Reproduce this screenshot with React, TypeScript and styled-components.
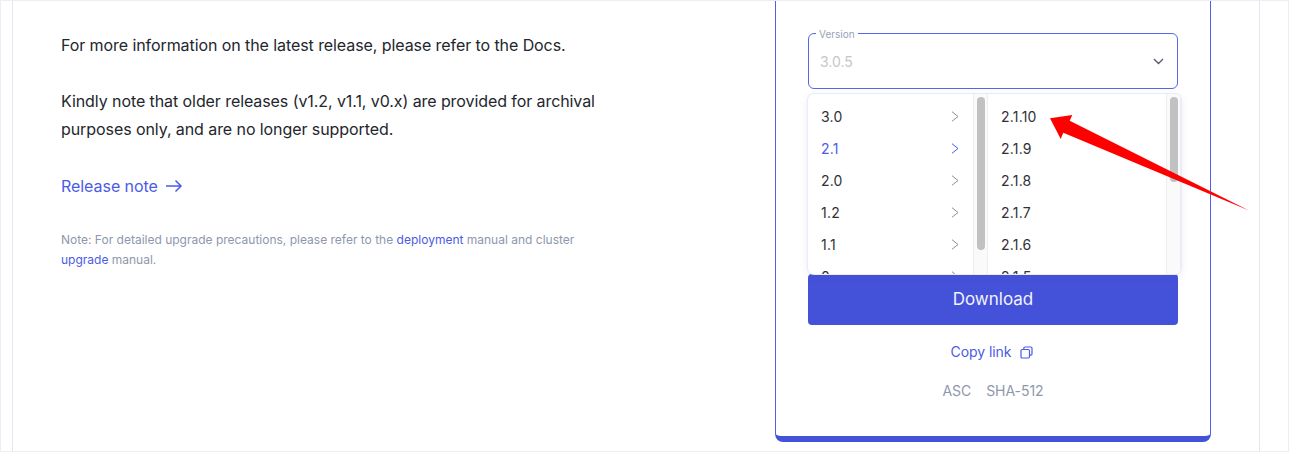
import styled, { createGlobalStyle } from 'styled-components';

const majors = ['3.0', '2.1', '2.0', '1.2', '1.1', '0.x'];
const minors = ['2.1.10', '2.1.9', '2.1.8', '2.1.7', '2.1.6', '2.1.5'];

const App = () => {
  return (
    <Frame>
      <GlobalStyle />
      <Panel>
        <Intro>
          <Paragraph>For more information on the latest release, please refer to the Docs.</Paragraph>
          <Paragraph>
            Kindly note that older releases (v1.2, v1.1, v0.x) are provided for archival purposes only, and are no
            longer supported.
          </Paragraph>
          <ReleaseLink href="#">
            Release note
            <svg width="18" height="14" viewBox="0 0 18 14" fill="none" stroke="currentColor" strokeWidth="1.5">
              <path d="M1 7h15M10.500 1.500 16 7l-5.500 5.500" />
            </svg>
          </ReleaseLink>
          <Note>
            Note: For detailed upgrade precautions, please refer to the <a href="#">deployment</a> manual and cluster{' '}
            <a href="#">upgrade</a> manual.
          </Note>
        </Intro>

        <Card>
          <VersionField>
            <VersionLegend>
              <span>Version</span>
            </VersionLegend>
            <VersionRow>
              <VersionValue>3.0.5</VersionValue>
              <svg width="11" height="7" viewBox="0 0 11 7" fill="none" stroke="#555b6b" strokeWidth="1.400">
                <path d="M1 1l4.500 4.500L10 1" />
              </svg>
            </VersionRow>
          </VersionField>

          <DownloadArea>
            <Dropdown>
              <Column $width={180}>
                <Items>
                  {majors.map((major) => (
                    <Item key={major} $active={major === '2.1'}>
                      {major}
                      <svg width="8" height="11" viewBox="0 0 8 11" fill="none" stroke="currentColor" strokeWidth="1">
                        <path d="M1 .7 7 5.500l-6 4.800" />
                      </svg>
                    </Item>
                  ))}
                </Items>
                <ScrollTrack>
                  <ScrollThumb $height={153} />
                </ScrollTrack>
              </Column>
              <Column $width={193}>
                <Items>
                  {minors.map((minor) => (
                    <Item key={minor}>{minor}</Item>
                  ))}
                </Items>
                <ScrollTrack>
                  <ScrollThumb $height={85} />
                </ScrollTrack>
              </Column>
            </Dropdown>
            <DownloadButton>Download</DownloadButton>
          </DownloadArea>

          <CopyLink href="#">
            Copy link
            <svg width="13" height="13" viewBox="0 0 13 13" fill="none" stroke="currentColor" strokeWidth="1.200">
              <rect x="1" y="3.500" width="8.500" height="8.500" rx="1.200" />
              <path d="M3.800 3.500V2.200C3.800 1.500 4.300 1 5 1h5.800c.7 0 1.200.5 1.200 1.200V8c0 .7-.5 1.200-1.200 1.200H9.500" />
            </svg>
          </CopyLink>

          <Checksums>
            <span>ASC</span>
            <span>SHA-512</span>
          </Checksums>
        </Card>

        <Annotation width="202" height="98" viewBox="0 0 202 98">
          <polygon points="0,4.300 22.300,1 19.700,6.700 199,96.600 13.300,18.700 10.700,25" fill="#ff0000" />
        </Annotation>
      </Panel>
    </Frame>
  );
};

export default App;

const GlobalStyle = createGlobalStyle`
  html, body {
    margin: 0;
    padding: 0;
    background: #fff;
  }

  body {
    font-family: Inter, "Liberation Sans", sans-serif;
    color: #23262d;
  }

  a {
    color: #4a5be6;
    text-decoration: none;
  }
`;

const Frame = styled.div`
  box-sizing: border-box;
  width: 1289px;
  height: 452px;
  padding: 0 28px 0 11px;
  border: 1px solid #eceef3;
`;

const Panel = styled.main`
  position: relative;
  box-sizing: border-box;
  width: 1248px;
  height: 450px;
  display: flex;
  overflow: hidden;
  background: #fff;
  border-left: 1px solid #e3e7f2;
  border-right: 1px solid #e3e7f2;
`;

const Intro = styled.section`
  box-sizing: border-box;
  width: 762px;
  padding: 30px 0 0 48px;
`;

const Paragraph = styled.p`
  width: 550px;
  margin: 0 0 28px;
  font-size: 16px;
  line-height: 28px;
  letter-spacing: -0.08px;
  color: #23262d;
`;

const ReleaseLink = styled.a`
  display: inline-flex;
  align-items: center;
  gap: 7px;
  margin-top: 1px;
  font-size: 16px;
  line-height: 28px;
  letter-spacing: -0.05px;
`;

const Note = styled.p`
  width: 530px;
  margin: 30px 0 0;
  font-size: 12px;
  line-height: 20px;
  color: #8e97ad;
`;

const Card = styled.section`
  box-sizing: border-box;
  width: 436px;
  height: 441px;
  display: flex;
  flex-direction: column;
  padding: 25px 32px 0;
  background: #fff;
  border: 1px solid #4f5fe8;
  border-top: 0;
  border-bottom: 6px solid #4451d9;
  border-radius: 0 0 8px 8px;
`;

const VersionField = styled.fieldset`
  box-sizing: border-box;
  width: 370px;
  height: 63px;
  margin: 0;
  padding: 13px 13px 0 11px;
  border: 1.3px solid #5565ee;
  border-radius: 6px;
`;

const VersionRow = styled.div`
  display: flex;
  align-items: center;
  justify-content: space-between;
`;

const VersionLegend = styled.legend`
  margin-left: -4px;
  padding: 0 3px;
  font-size: 10px;
  line-height: 14px;
  color: #98a1b8;

  span {
    display: block;
    transform: translateY(1px);
  }
`;

const VersionValue = styled.span`
  font-size: 14px;
  line-height: 17px;
  color: #c6c6c6;
`;

const DownloadArea = styled.div`
  position: relative;
  padding-top: 185px;
`;

const Dropdown = styled.div`
  position: absolute;
  top: 5px;
  left: 0;
  width: 373px;
  height: 180px;
  display: flex;
  overflow: hidden;
  background: #fff;
  border-radius: 6px;
  box-shadow: 0 0 0 1px #e9ecf6, 0 2px 8px rgba(80, 90, 160, 0.12);
  z-index: 1;
`;

const Column = styled.div<{ $width: number }>`
  width: ${({ $width }) => $width}px;
  display: flex;
`;

const Items = styled.ul`
  flex: 1;
  margin: 0;
  padding: 6px 0 0;
  list-style: none;
`;

const Item = styled.li<{ $active?: boolean }>`
  height: 32px;
  padding: 0 14px 0 13px;
  display: flex;
  align-items: center;
  justify-content: space-between;
  font-size: 14px;
  letter-spacing: 0.2px;
  color: ${({ $active }) => ($active ? '#4a5be6' : '#2f3136')};

  svg {
    color: ${({ $active }) => ($active ? '#4a5be6' : '#8f8f8f')};
  }
`;

const ScrollTrack = styled.div`
  box-sizing: border-box;
  width: 15px;
  padding: 3px 3px 0;
  background: #fafafa;
  border-left: 1px solid #eeeeee;
  border-right: 1px solid #eeeeee;
`;

const ScrollThumb = styled.div<{ $height: number }>`
  width: 8px;
  height: ${({ $height }) => $height}px;
  background: #c1c1c1;
  border-radius: 4px;
`;

const DownloadButton = styled.button`
  display: block;
  width: 370px;
  height: 51px;
  padding: 0 0 2px;
  border: 0;
  border-radius: 4px;
  background: #4451d9;
  color: #f2f3fd;
  font-family: inherit;
  font-size: 17px;
`;

const CopyLink = styled.a`
  align-self: center;
  display: flex;
  align-items: center;
  gap: 9px;
  margin: 17px 2px 0 0;
  font-size: 14px;
  line-height: 20px;
  letter-spacing: -0.07px;
`;

const Checksums = styled.div`
  display: flex;
  justify-content: center;
  gap: 15px;
  margin-top: 18.500px;
  font-size: 14px;
  line-height: 20px;
  letter-spacing: -0.05px;
  color: #8e97ad;
`;

const Annotation = styled.svg`
  position: absolute;
  top: 113px;
  left: 1037px;
  z-index: 2;
`;
